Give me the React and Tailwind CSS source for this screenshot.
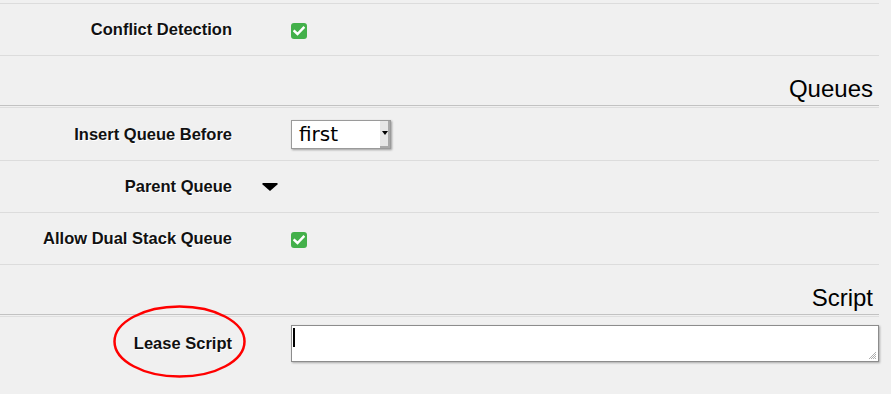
import React from "react";

function Check() {
  return (
    <span className="flex h-4 w-4 items-center justify-center rounded-[3px] bg-[#43b04a] mt-[3px]">
      <svg width="12" height="10" viewBox="0 0 12 10">
        <path d="M1.5 5.2 L4.5 8 L10.5 1.8" fill="none" stroke="#fff" strokeWidth="2.4" strokeLinecap="square" />
      </svg>
    </span>
  );
}

function Row({ label, children, className = "" }) {
  return (
    <div className={"flex items-center border-b border-[#dcdcdc] " + className}>
      <div className="w-[232px] shrink-0 text-right text-[16.5px] font-bold text-[#111] [text-shadow:1px_1px_0_#fff]">
        {label}
      </div>
      <div className="ml-[59px] flex flex-1 items-center">{children}</div>
    </div>
  );
}

function Section({ title }) {
  return (
    <div>
      <div className="flex h-[50px] items-end justify-end border-b border-[#c2c2c2] pb-[4px] pr-[6px]">
        <span className="text-[24px] leading-6 text-black">{title}</span>
      </div>
      <div className="mt-px h-px bg-[#dedede]" />
    </div>
  );
}

export default function App() {
  return (
    <div className="relative h-[394px] w-[891px] overflow-hidden bg-[#f0f0f0] font-['Liberation_Sans',Arial,sans-serif]">
      <div className="w-[879px] pt-[3px]">
        <div className="h-px bg-[#dcdcdc]" />
        <Row label="Conflict Detection" className="h-[52px]">
          <Check />
        </Row>
        <Section title="Queues" />
        <Row label="Insert Queue Before" className="h-[53px]">
          <div className="relative flex h-[29px] w-[100px] items-center border border-[#9a9a9a] bg-white shadow-[1px_1px_2px_rgba(0,0,0,0.35)]">
            <span className="pl-[7px] font-['DejaVu_Sans',sans-serif] text-[20px] leading-none text-black">first</span>
            <span className="absolute right-0 top-0 flex h-full w-[11px] justify-center border-l border-white bg-[#e6e6e6] shadow-[inset_-2px_-2px_0_#a8a8a8]">
              <svg width="6" height="4" viewBox="0 0 6 4" className="mt-[10px]">
                <path d="M0 0 H6 L3 4 Z" fill="#000" />
              </svg>
            </span>
          </div>
        </Row>
        <Row label="Parent Queue" className="h-[52px]">
          <svg width="16" height="9" viewBox="0 0 16 9" className="-ml-[29px] mt-[1px]">
            <path d="M0 1 L1 0 H15 L16 1 L8 8 Z" fill="#000" />
          </svg>
        </Row>
        <Row label="Allow Dual Stack Queue" className="h-[52px]">
          <Check />
        </Row>
        <Section title="Script" />
        <div className="flex items-start pt-[8px]">
          <div className="flex h-[37px] w-[232px] shrink-0 items-center justify-end text-[16.5px] font-bold text-[#111] [text-shadow:1px_1px_0_#fff]">
            Lease Script
          </div>
          <div className="relative ml-[59px] h-[37px] flex-1 border border-[#8c8c8c] bg-white shadow-[1px_1px_2px_rgba(0,0,0,0.3)]">
            <span className="absolute left-[1px] top-[2px] h-[19px] w-[2px] bg-black" />
            <svg width="10" height="10" viewBox="0 0 10 10" className="absolute bottom-[1px] right-[1px]">
              <path d="M9 2 L2 9 M9 4 L4 9 M9 6 L6 9 M9 8 L8 9" stroke="#999" strokeWidth="0.8" />
            </svg>
          </div>
        </div>
      </div>
      <svg width="135" height="75" viewBox="0 0 135 75" className="absolute left-[112px] top-[304px]">
        <ellipse cx="67.5" cy="37.5" rx="65" ry="35" fill="none" stroke="#f00" strokeWidth="2.5" />
      </svg>
    </div>
  );
}
